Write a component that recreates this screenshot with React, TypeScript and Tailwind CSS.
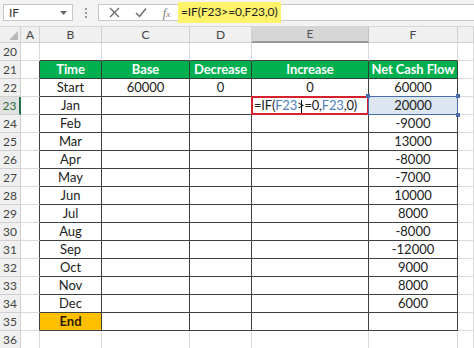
import React from "react";

type Row = {
  n: number;
  kind?: "head" | "data" | "end";
  b?: string;
  c?: string;
  d?: string;
  e?: string;
  f?: string;
};

const rows: Row[] = [
  { n: 20 },
  { n: 21, kind: "head" },
  { n: 22, kind: "data", b: "Start", c: "60000", d: "0", e: "0", f: "60000" },
  { n: 23, kind: "data", b: "Jan", f: "20000" },
  { n: 24, kind: "data", b: "Feb", f: "-9000" },
  { n: 25, kind: "data", b: "Mar", f: "13000" },
  { n: 26, kind: "data", b: "Apr", f: "-8000" },
  { n: 27, kind: "data", b: "May", f: "-7000" },
  { n: 28, kind: "data", b: "Jun", f: "10000" },
  { n: 29, kind: "data", b: "Jul", f: "8000" },
  { n: 30, kind: "data", b: "Aug", f: "-8000" },
  { n: 31, kind: "data", b: "Sep", f: "-12000" },
  { n: 32, kind: "data", b: "Oct", f: "9000" },
  { n: 33, kind: "data", b: "Nov", f: "8000" },
  { n: 34, kind: "data", b: "Dec", f: "6000" },
  { n: 35, kind: "end" },
  { n: 36 },
];

const headers = ["Time", "Base", "Decrease", "Increase", "Net Cash Flow"];

// plain gridline cell vs. table cell with dark borders
const plain = "border-r border-b border-[#dadada]";
const dark = "border-r border-b border-[#3f3f3f]";

function Formula({ cursor }: { cursor?: boolean }) {
  return (
    <span className="whitespace-nowrap">
      =IF(<span className="text-[#4f7fc0]">F23</span>&gt;
      {cursor && <span className="inline-block w-px h-[13px] bg-black align-middle -ml-[3px] mr-[2px]" />}
      =0,<span className="text-[#4f7fc0]">F23</span>,0)
    </span>
  );
}

function DataRow({ r }: { r: Row }) {
  const inTable = !!r.kind;
  const cellA = inTable
    ? "border-r border-b border-r-[#3f3f3f] border-b-[#dadada]"
    : plain;
  const tableCls = r.n === 20 ? "border-r border-b border-r-[#dadada] border-b-[#3f3f3f]" : inTable ? dark : plain;
  const active = r.n === 23;

  return (
    <>
      <div
        className={
          active
            ? "bg-[#e1e1e1] text-[#2e6b40] border-r-2 border-r-[#217346] border-b border-b-[#d0d0d0] flex items-center justify-center text-[12px]"
            : "bg-[#f0f0f0] text-[#444] border-r border-b border-[#d0d0d0] flex items-center justify-center text-[12px]"
        }
      >
        {r.n}
      </div>
      <div className={cellA} />
      {r.kind === "head" &&
        headers.map((h) => (
          <div
            key={h}
            className="bg-[#00b050] text-white font-bold border-r border-b border-[#2f3f33] flex items-center justify-center text-[13px] whitespace-nowrap tracking-[-0.1px]"
          >
            {h}
          </div>
        ))}
      {r.kind === "data" && (
        <>
          <div className={`${dark} flex items-center justify-center`}>{r.b}</div>
          <div className={`${dark} flex items-center justify-center`}>{r.c}</div>
          <div className={`${dark} flex items-center justify-center`}>{r.d}</div>
          {active ? (
            <div className={`${dark} relative`}>
              <div className="absolute -left-px -top-px -right-px -bottom-px border-2 border-[#d3212d] flex items-center pl-px text-[13px] tracking-[-0.2px]">
                <Formula cursor />
              </div>
            </div>
          ) : (
            <div className={`${dark} flex items-center justify-center`}>{r.e}</div>
          )}
          {active ? (
            <div className={`${dark} relative bg-[#dce6f1]`}>
              <div className="absolute -left-px -top-px -right-px -bottom-px border border-[#4a6ea9] flex items-center justify-center">
                {r.f}
              </div>
              <div className="absolute -right-[3px] -top-[3px] w-[4px] h-[4px] bg-[#4a6ea9]" />
              <div className="absolute -right-[3px] -bottom-[3px] w-[4px] h-[4px] bg-[#4a6ea9]" />
              <div className="absolute -left-[3px] -top-[3px] w-[4px] h-[4px] bg-[#4a6ea9]" />
            </div>
          ) : (
            <div className={`${dark} flex items-center justify-center`}>{r.f}</div>
          )}
        </>
      )}
      {r.kind === "end" && (
        <>
          <div className={`${dark} bg-[#ffc000] font-bold text-[#2a1c00] flex items-center justify-center`}>End</div>
          <div className={dark} />
          <div className={dark} />
          <div className={dark} />
          <div className={dark} />
        </>
      )}
      {!r.kind && (
        <>
          <div className={tableCls} />
          <div className={tableCls} />
          <div className={tableCls} />
          <div className={tableCls} />
          <div className={tableCls} />
        </>
      )}
      <div className={plain} />
    </>
  );
}

export default function App() {
  return (
    <div
      className="w-[474px] h-[348px] overflow-hidden bg-white text-[#222] text-[13px]"
      style={{ fontFamily: "Lato, 'Liberation Sans', sans-serif" }}
    >
      {/* Name box + formula bar */}
      <div className="h-[27px] bg-[#f3f3f3] flex items-start pt-[4px] border-b border-[#d6d6d6]">
        <div className="ml-[3px] w-[70px] h-[17px] bg-white border border-[#c8c8c8] flex items-center justify-between px-[5px] text-[12px] text-[#333]">
          <span>IF</span>
          <svg width="7" height="4" viewBox="0 0 7 4">
            <path d="M0 0 L7 0 L3.5 4 Z" fill="#666" />
          </svg>
        </div>
        <div className="w-[25px] h-[17px] flex flex-col items-center justify-center gap-[2px]">
          <span className="w-[2px] h-[2px] bg-[#9a9a9a]" />
          <span className="w-[2px] h-[2px] bg-[#9a9a9a]" />
          <span className="w-[2px] h-[2px] bg-[#9a9a9a]" />
        </div>
        <div className="flex-1 h-[17px] bg-white border-l border-t border-b border-[#c8c8c8] flex items-center">
          <div className="w-[79px] flex items-center justify-around text-[#666] shrink-0 pl-[2px]">
            <svg width="11" height="11" viewBox="0 0 11 11">
              <path d="M1 1 L10 10 M10 1 L1 10" stroke="#6b6b6b" strokeWidth="1.3" />
            </svg>
            <svg width="12" height="11" viewBox="0 0 12 11">
              <path d="M1 6 L4.5 9.5 L11 1.5" stroke="#6b6b6b" strokeWidth="1.5" fill="none" />
            </svg>
            <span className="italic text-[12px] text-[#777]" style={{ fontFamily: "'Liberation Serif', serif" }}>
              f<span className="text-[9px]">x</span>
            </span>
          </div>
          <div className="h-[21px] -mt-[1px] bg-[#fff36b] flex items-center px-[3px] text-[12px] text-[#222] shrink-0 tracking-[-0.1px]">
            =IF(F23&gt;=0,F23,0)
          </div>
        </div>
      </div>

      {/* Sheet grid */}
      <div className="grid grid-cols-[21px_19px_62px_88px_62px_117px_89px_16px] grid-rows-[16px] auto-rows-[18px]">
        {/* Column header row */}
        <div className="bg-[#f0f0f0] border-r border-b border-[#d0d0d0] relative">
          <div className="absolute right-[2px] bottom-[2px] w-0 h-0 border-l-[9px] border-l-transparent border-b-[9px] border-b-[#b8b8b8]" />
        </div>
        {["A", "B", "C", "D", "E", "F", ""].map((l) =>
          l === "E" ? (
            <div
              key={l}
              className="bg-[#d6d6d6] text-[#555] border-r border-r-[#c0c0c0] border-b-2 border-b-[#9a9a9a] flex items-center justify-center text-[12px]"
            >
              {l}
            </div>
          ) : (
            <div
              key={l || "g"}
              className="bg-[#f0f0f0] text-[#444] border-r border-b border-[#d0d0d0] flex items-center justify-center text-[12px]"
            >
              {l}
            </div>
          )
        )}
        {rows.map((r) => (
          <DataRow key={r.n} r={r} />
        ))}
      </div>
    </div>
  );
}
